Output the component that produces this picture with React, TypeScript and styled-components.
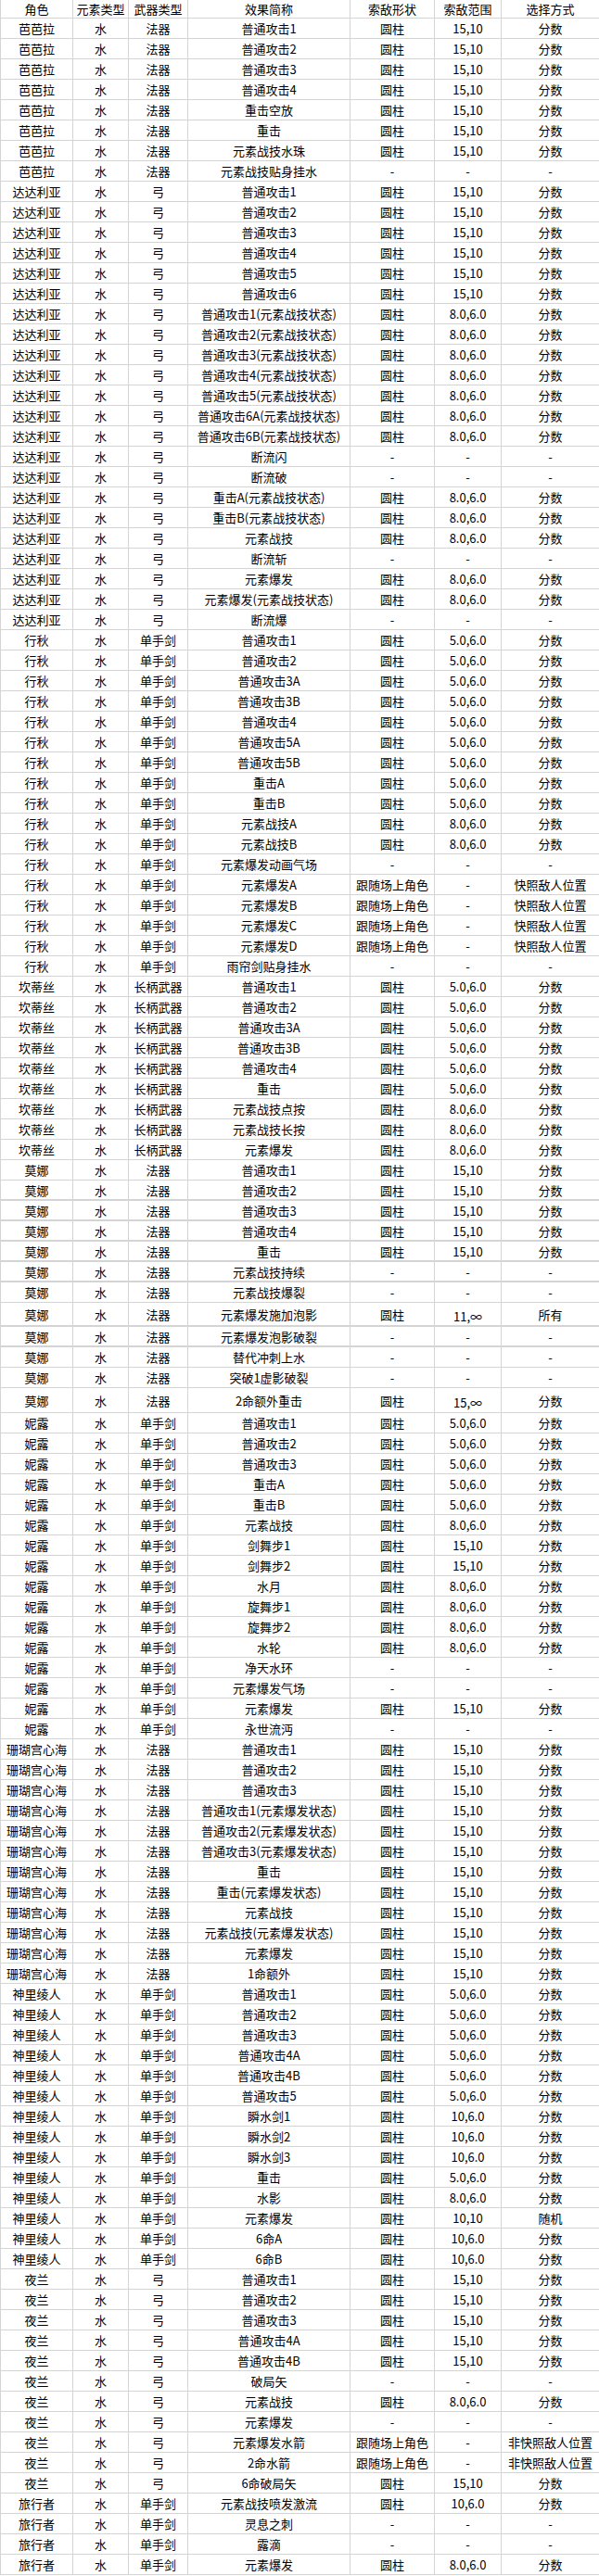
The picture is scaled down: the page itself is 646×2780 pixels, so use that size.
import React from "react";
import styled, { createGlobalStyle } from "styled-components";

const GlobalStyle = createGlobalStyle`
    body {
        margin: 0;
        background: #ffffff;
        font-family: "Noto Sans CJK SC", "Noto Sans", sans-serif;
    }
`;

const COLUMNS = "78px 60px 64px 175px 91px 72px 106px";

const Sheet = styled.div`
    width: 646px;
    border-left: 1px solid #d4d4d4;
    box-sizing: border-box;
    color: #000;
    font-size: 13px;
`;

// header is a bit shorter than the body rows (20 vs 22)
const Row = styled.div<{ $height: number; $thick?: boolean }>`
    display: grid;
    grid-template-columns: ${COLUMNS};
    height: ${(p) => p.$height}px;
    box-sizing: border-box;
    border-bottom: ${(p) => (p.$thick ? 2 : 1)}px solid #d4d4d4;
`;

const Cell = styled.div<{ $low?: boolean }>`
    display: flex;
    align-items: center;
    justify-content: center;
    white-space: nowrap;
    overflow: hidden;
    border-right: 1px solid #d4d4d4;
    line-height: 1;
    padding-top: ${(p) => (p.$low ? 5 : 0)}px;
    box-sizing: border-box;
`;

type Hit = [string, string, string];

const PRESET: Record<string, Hit> = {
    a: ["圆柱", "15,10", "分数"],
    b: ["圆柱", "8.0,6.0", "分数"],
    c: ["圆柱", "5.0,6.0", "分数"],
    d: ["圆柱", "10,6.0", "分数"],
    "-": ["-", "-", "-"],
    f: ["跟随场上角色", "-", "快照敌人位置"],
    g: ["跟随场上角色", "-", "非快照敌人位置"],
    m: ["圆柱", "11,∞", "所有"],
    n: ["圆柱", "15,∞", "分数"],
    r: ["圆柱", "10,10", "随机"],
};

interface RowData {
    name: string;
    weapon: string;
    effect: string;
    hit: Hit;
    height: number;
    thick?: boolean;
    low?: boolean;
}

const group = (name: string, weapon: string, list: string[]): RowData[] =>
    list.map((item) => {
        const [effect, key, flags = ""] = item.split("|");
        let height = 22;
        if (key === "m") height = 26;
        if (key === "n") height = 27;
        return {
            name,
            weapon,
            effect,
            hit: PRESET[key],
            height,
            thick: flags.includes("t"),
            low: key === "m" || key === "n",
        };
    });

const rows: RowData[] = [
    ...group("芭芭拉", "法器", [
        "普通攻击1|a",
        "普通攻击2|a",
        "普通攻击3|a",
        "普通攻击4|a",
        "重击空放|a",
        "重击|a",
        "元素战技水珠|a",
        "元素战技贴身挂水|-",
    ]),
    ...group("达达利亚", "弓", [
        "普通攻击1|a",
        "普通攻击2|a",
        "普通攻击3|a",
        "普通攻击4|a",
        "普通攻击5|a",
        "普通攻击6|a",
        "普通攻击1(元素战技状态)|b",
        "普通攻击2(元素战技状态)|b",
        "普通攻击3(元素战技状态)|b",
        "普通攻击4(元素战技状态)|b",
        "普通攻击5(元素战技状态)|b",
        "普通攻击6A(元素战技状态)|b",
        "普通攻击6B(元素战技状态)|b",
        "断流闪|-",
        "断流破|-",
        "重击A(元素战技状态)|b",
        "重击B(元素战技状态)|b",
        "元素战技|b",
        "断流斩|-",
        "元素爆发|b",
        "元素爆发(元素战技状态)|b",
        "断流爆|-",
    ]),
    ...group("行秋", "单手剑", [
        "普通攻击1|c",
        "普通攻击2|c",
        "普通攻击3A|c",
        "普通攻击3B|c",
        "普通攻击4|c",
        "普通攻击5A|c",
        "普通攻击5B|c",
        "重击A|c",
        "重击B|c",
        "元素战技A|b",
        "元素战技B|b",
        "元素爆发动画气场|-",
        "元素爆发A|f",
        "元素爆发B|f",
        "元素爆发C|f",
        "元素爆发D|f",
        "雨帘剑贴身挂水|-",
    ]),
    ...group("坎蒂丝", "长柄武器", [
        "普通攻击1|c",
        "普通攻击2|c",
        "普通攻击3A|c",
        "普通攻击3B|c",
        "普通攻击4|c",
        "重击|c",
        "元素战技点按|b",
        "元素战技长按|b",
        "元素爆发|b",
    ]),
    ...group("莫娜", "法器", [
        "普通攻击1|a",
        "普通攻击2|a|t",
        "普通攻击3|a|t",
        "普通攻击4|a|t",
        "重击|a|t",
        "元素战技持续|-|t",
        "元素战技爆裂|-",
        "元素爆发施加泡影|m|t",
        "元素爆发泡影破裂|-|t",
        "替代冲刺上水|-",
        "突破1虚影破裂|-",
        "2命额外重击|n",
    ]),
    ...group("妮露", "单手剑", [
        "普通攻击1|c",
        "普通攻击2|c",
        "普通攻击3|c",
        "重击A|c",
        "重击B|c",
        "元素战技|b",
        "剑舞步1|a",
        "剑舞步2|a",
        "水月|b",
        "旋舞步1|b",
        "旋舞步2|b",
        "水轮|b",
        "净天水环|-",
        "元素爆发气场|-",
        "元素爆发|a",
        "永世流沔|-",
    ]),
    ...group("珊瑚宫心海", "法器", [
        "普通攻击1|a",
        "普通攻击2|a",
        "普通攻击3|a",
        "普通攻击1(元素爆发状态)|a",
        "普通攻击2(元素爆发状态)|a",
        "普通攻击3(元素爆发状态)|a",
        "重击|a",
        "重击(元素爆发状态)|a",
        "元素战技|a",
        "元素战技(元素爆发状态)|a",
        "元素爆发|a",
        "1命额外|a",
    ]),
    ...group("神里绫人", "单手剑", [
        "普通攻击1|c",
        "普通攻击2|c",
        "普通攻击3|c",
        "普通攻击4A|c",
        "普通攻击4B|c",
        "普通攻击5|c",
        "瞬水剑1|d",
        "瞬水剑2|d",
        "瞬水剑3|d",
        "重击|c",
        "水影|b",
        "元素爆发|r",
        "6命A|d",
        "6命B|d",
    ]),
    ...group("夜兰", "弓", [
        "普通攻击1|a",
        "普通攻击2|a",
        "普通攻击3|a",
        "普通攻击4A|a",
        "普通攻击4B|a",
        "破局矢|-",
        "元素战技|b",
        "元素爆发|-",
        "元素爆发水箭|g",
        "2命水箭|g",
        "6命破局矢|a",
    ]),
    ...group("旅行者", "单手剑", [
        "元素战技喷发激流|d",
        "灵息之刺|-",
        "露滴|-",
        "元素爆发|b",
    ]),
];

const HEADERS = ["角色", "元素类型", "武器类型", "效果简称", "索敌形状", "索敌范围", "选择方式"];

export default function App() {
    return (
        <>
            <GlobalStyle />
            <Sheet>
                <Row $height={20}>
                    {HEADERS.map((h) => (
                        <Cell key={h}>{h}</Cell>
                    ))}
                </Row>
                {rows.map((r, i) => (
                    <Row key={i} $height={r.height} $thick={r.thick}>
                        <Cell>{r.name}</Cell>
                        <Cell>水</Cell>
                        <Cell>{r.weapon}</Cell>
                        <Cell>{r.effect}</Cell>
                        <Cell>{r.hit[0]}</Cell>
                        <Cell $low={r.low}>{r.hit[1]}</Cell>
                        <Cell>{r.hit[2]}</Cell>
                    </Row>
                ))}
            </Sheet>
        </>
    );
}
